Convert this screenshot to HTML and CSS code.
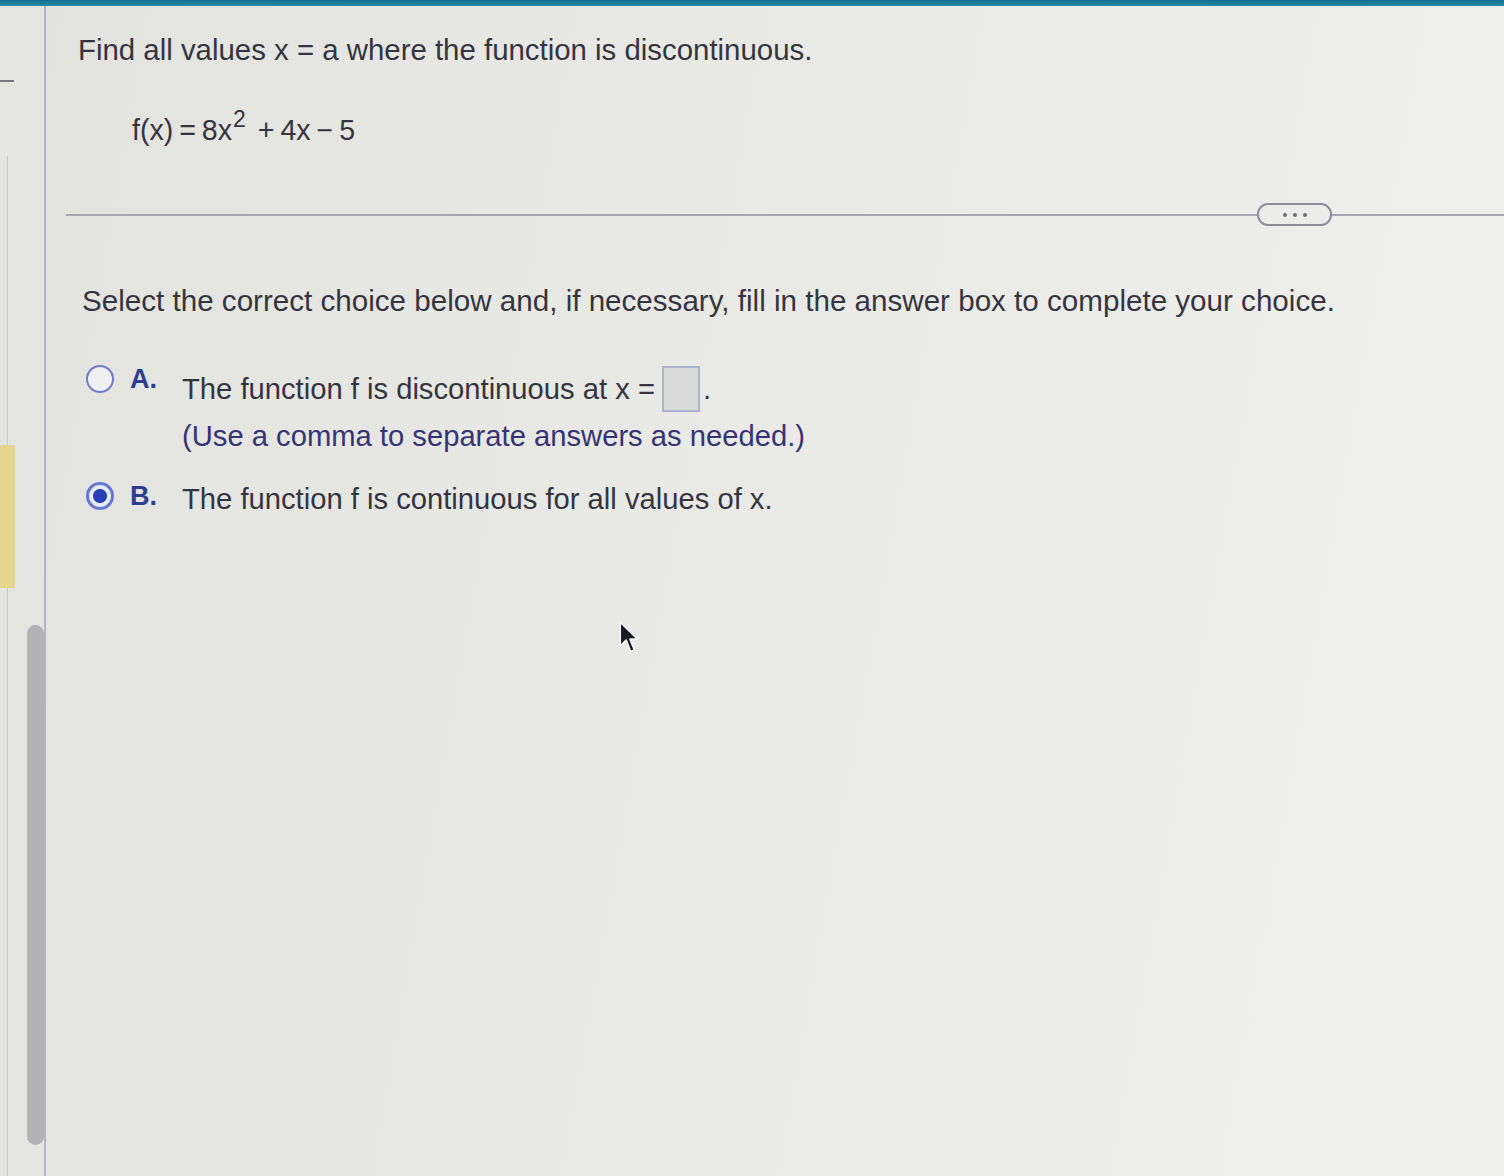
FILE: index.html
```html
<!DOCTYPE html>
<html lang="en">
<head>
<meta charset="utf-8">
<title>Discontinuity question</title>
<link rel="stylesheet" href="styles.css">
</head>
<body>
<div class="topbar"></div>
<div class="layout">
  <aside class="sidebar">
    <div class="dash"></div>
    <div class="rail"></div>
    <div class="marker"></div>
    <div class="thumb"></div>
  </aside>
  <main class="main">
    <h1 class="prompt">Find all values x = a where the function is discontinuous.</h1>
    <p class="formula">f(x) = 8x<sup>2</sup> + 4x − 5</p>
    <div class="divider">
      <span class="pill"><i></i><i></i><i></i></span>
    </div>
    <p class="instruction">Select the correct choice below and, if necessary, fill in the answer box to complete your choice.</p>
    <div class="choices">
      <div class="choice choice-a">
        <span class="radio"></span>
        <span class="letter">A.</span>
        <div class="choice-text">
          <div class="line">The function f is discontinuous at x =<span class="answer-box"></span>.</div>
          <div class="hint">(Use a comma to separate answers as needed.)</div>
        </div>
      </div>
      <div class="choice choice-b">
        <span class="radio checked"></span>
        <span class="letter">B.</span>
        <div class="choice-text">
          <div class="line">The function f is continuous for all values of x.</div>
        </div>
      </div>
    </div>
    <svg class="cursor" width="24" height="36" viewBox="0 0 22 33">
      <path d="M2 2 L2 24 L7.5 18.5 L11.5 29 L15 27.5 L11 17.5 L18 17.5 Z" fill="#1a1a22" stroke="#f4f4f4" stroke-width="1.6" stroke-linejoin="round"/>
    </svg>
  </main>
</div>
</body>
</html>
```
FILE: styles.css
```css
html, body {
  margin: 0;
  padding: 0;
}
body {
  width: 1504px;
  height: 1176px;
  overflow: hidden;
  background: linear-gradient(100deg, #e2e2df 0%, #e8e8e5 40%, #efefed 100%);
  font-family: "Liberation Sans", Arial, sans-serif;
  color: #35353f;
}
.topbar {
  height: 6px;
  background: linear-gradient(180deg, #12708e, #2a88a8);
}
.layout {
  display: flex;
  height: 1170px;
}
.sidebar {
  position: relative;
  width: 44px;
  flex: none;
  border-right: 2px solid #b4b4bc;
  background: #e4e4e1;
}
.dash {
  position: absolute;
  left: 0;
  top: 74px;
  width: 14px;
  height: 2px;
  background: #777780;
}
.rail {
  position: absolute;
  left: 7px;
  top: 150px;
  bottom: 0;
  width: 1px;
  background: #c8c8cc;
}
.marker {
  position: absolute;
  left: 0;
  top: 439px;
  width: 15px;
  height: 143px;
  background: #e6d58e;
}
.thumb {
  position: absolute;
  left: 27px;
  top: 619px;
  width: 17px;
  height: 520px;
  border-radius: 9px;
  background: #b3b3b5;
}
.main {
  position: relative;
  flex: 1;
  padding-left: 32px;
}
.prompt {
  margin: 26px 0 0;
  font-size: 29.4px;
  font-weight: normal;
  line-height: 36px;
}
.formula {
  margin: 44px 0 0 54px;
  font-size: 28.6px;
  line-height: 36px;
  word-spacing: -2px;
}
.formula sup {
  font-size: 23px;
  vertical-align: 13px;
  line-height: 0;
  margin-left: 1px;
  margin-right: 6px;
}
.divider {
  position: relative;
  margin: 66px 0 0 -12px;
  height: 2px;
  background: #a6a6b0;
}
.pill {
  position: absolute;
  left: 1191px;
  top: -11px;
  width: 71px;
  height: 19px;
  border: 2px solid #8e8e98;
  border-radius: 11px;
  background: #ececea;
  display: flex;
  align-items: center;
  justify-content: center;
  gap: 6px;
}
.pill i {
  width: 4px;
  height: 4px;
  border-radius: 50%;
  background: #6e6e7a;
}
.instruction {
  margin: 67px 0 0 4px;
  font-size: 29.6px;
  line-height: 36px;
}
.choices {
  margin-top: 44px;
  margin-left: 8px;
  display: flex;
  flex-direction: column;
  gap: 28px;
}
.choice {
  display: flex;
  align-items: flex-start;
}
.radio {
  flex: none;
  width: 28px;
  height: 28px;
  margin-top: 2px;
  border: 2px solid #6d7ccc;
  border-radius: 50%;
  box-sizing: border-box;
  background: #f0f0f2;
}
.radio.checked {
  border: 3px solid #6478d4;
  background: radial-gradient(circle, #2840b8 0 6.5px, #e8eaf4 7.5px);
}
.letter {
  width: 52px;
  margin-left: 16px;
  font-size: 27px;
  font-weight: bold;
  color: #2c3e8e;
  line-height: 32px;
}
.choice-text {
  padding-top: 3px;
  font-size: 29.2px;
  line-height: 32px;
}
.line {
  display: flex;
  align-items: center;
  white-space: pre;
}
.answer-box {
  display: inline-block;
  width: 34px;
  height: 42px;
  margin: 0 3px 0 7px;
  border: 2px solid #aab2cc;
  background: #d9d9d9;
}
.hint {
  margin-top: 8px;
  color: #363474;
}
.cursor {
  position: absolute;
  left: 572px;
  top: 614px;
}
```
